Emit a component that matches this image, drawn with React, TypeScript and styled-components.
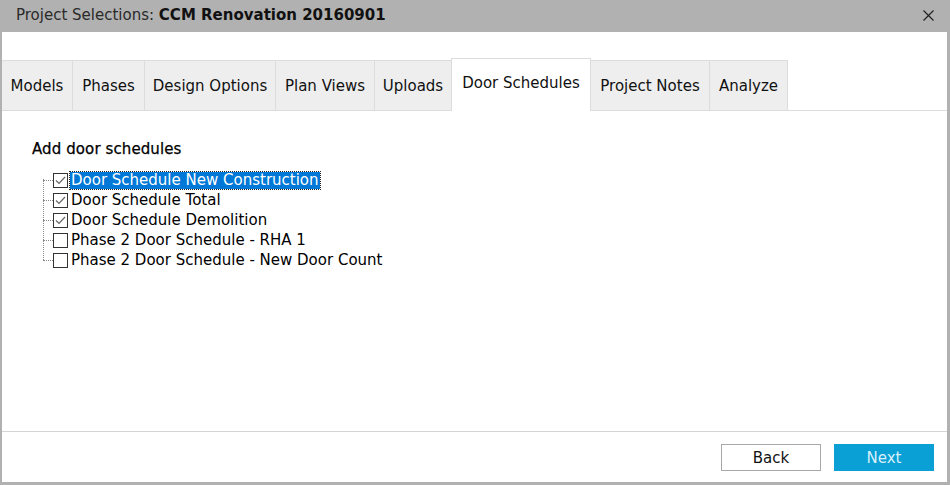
import React from "react";
import styled, { createGlobalStyle } from "styled-components";

const Global = createGlobalStyle`
  html, body { margin: 0; padding: 0; background: #fff; }
  body { font-family: "DejaVu Sans", Verdana, sans-serif; }
  * { box-sizing: border-box; }
`;

const Window = styled.div`
  width: 950px;
  height: 485px;
  display: flex;
  flex-direction: column;
  background: #fff;
  border-left: 2px solid #b1b1b1;
  border-right: 3px solid #b1b1b1;
  border-bottom: 3px solid #b1b1b1;
`;

const TitleBar = styled.div`
  height: 32px;
  margin: 0 -3px 0 -2px;
  background: #b1b1b1;
  display: flex;
  align-items: center;
  justify-content: space-between;
  padding: 0 16px 2px 16px;
  font-size: 15px;
  flex: none;
`;

const Title = styled.div`
  white-space: nowrap;
  color: #2a2a2a;
`;

const TitleStrong = styled.span`
  font-weight: bold;
  color: #111;
`;

const CloseIcon = () => (
  <svg width="11" height="11" viewBox="0 0 11 11">
    <path d="M0.5 0.5 L10.5 10.5 M10.5 0.5 L0.5 10.5" stroke="#222" strokeWidth="1.2" />
  </svg>
);

const Body = styled.div`
  flex: 1;
  display: flex;
  flex-direction: column;
  padding-top: 26px;
`;

const TabStrip = styled.div`
  display: flex;
  align-items: flex-end;
  height: 53px;
  border-bottom: 1px solid #dcdcdc;
  flex: none;
`;

const Tab = styled.div<{ $active?: boolean; $w: number; $first?: boolean }>`
  width: ${(p) => p.$w}px;
  height: ${(p) => (p.$active ? 53 : 50)}px;
  margin-bottom: ${(p) => (p.$active ? -1 : 0)}px;
  background: ${(p) => (p.$active ? "#fff" : "#eeeeee")};
  border-top: 1px solid #dcdcdc;
  border-right: 1px solid #dcdcdc;
  border-left: ${(p) => (p.$active ? "1px solid #dcdcdc" : "none")};
  margin-left: ${(p) => (p.$active ? -1 : 0)}px;
  display: flex;
  align-items: center;
  justify-content: center;
  padding-bottom: ${(p) => (p.$active ? 4 : 0)}px;
  font-size: 15px;
  color: #111;
  white-space: nowrap;
`;

const Content = styled.div`
  flex: 1;
  padding: 29px 30px 0;
  border-bottom: 1px solid #d4d4d4;
`;

const Heading = styled.div`
  font-size: 15px;
  color: #000;
  -webkit-text-stroke: 0.25px #000;
  margin-bottom: 12px;
  letter-spacing: 0.1px;
`;

const Tree = styled.div`
  position: relative;
  margin-left: 11px;
  display: flex;
  flex-direction: column;
`;

const TreeLine = styled.div`
  position: absolute;
  left: 0;
  top: 9px;
  bottom: 10px;
  border-left: 1px dotted #888;
`;

const Row = styled.div`
  height: 20px;
  display: flex;
  align-items: center;
  font-size: 15px;
  color: #000;
`;

const Stub = styled.span`
  width: 10px;
  border-top: 1px dotted #888;
  flex: none;
`;

const Box = styled.span`
  width: 15px;
  height: 15px;
  border: 1px solid #333;
  background: #fff;
  display: flex;
  align-items: center;
  justify-content: center;
  flex: none;
  margin-right: 2px;
`;

const Label = styled.span<{ $selected?: boolean }>`
  padding: 0 1px;
  line-height: 17px;
  white-space: nowrap;
  background: ${(p) => (p.$selected ? "#0078d7" : "transparent")};
  color: ${(p) => (p.$selected ? "#fff" : "#000")};
  outline: ${(p) => (p.$selected ? "1px dotted #222" : "none")};
`;

const Footer = styled.div`
  height: 50px;
  flex: none;
  display: flex;
  justify-content: flex-end;
  align-items: flex-start;
  gap: 13px;
  padding: 12px 13px 0 0;
`;

const Button = styled.button<{ $primary?: boolean }>`
  width: 100px;
  height: 27px;
  border: 1px solid ${(p) => (p.$primary ? "#0a9fd5" : "#a8a8a8")};
  background: ${(p) => (p.$primary ? "#0a9fd5" : "#fff")};
  color: ${(p) => (p.$primary ? "#d8f0fa" : "#111")};
  font-family: "DejaVu Sans", Tahoma, sans-serif;
  font-size: 15px;
  padding: 0;
`;

const Check = () => (
  <svg width="11" height="9" viewBox="0 0 11 9">
    <path d="M1 4.5 L4 7.5 L10 1" fill="none" stroke="#666" strokeWidth="1.2" />
  </svg>
);

const tabs: [string, number][] = [
  ["Models", 71],
  ["Phases", 72],
  ["Design Options", 131],
  ["Plan Views", 99],
  ["Uploads", 77],
  ["Door Schedules", 140],
  ["Project Notes", 119],
  ["Analyze", 78],
];

const items: [string, boolean][] = [
  ["Door Schedule New Construction", true],
  ["Door Schedule Total", true],
  ["Door Schedule Demolition", true],
  ["Phase 2 Door Schedule - RHA 1", false],
  ["Phase 2 Door Schedule - New Door Count", false],
];

export default function App() {
  return (
    <>
      <Global />
      <Window>
        <TitleBar>
          <Title>
            Project Selections: <TitleStrong>CCM Renovation 20160901</TitleStrong>
          </Title>
          <CloseIcon />
        </TitleBar>
        <Body>
          <TabStrip>
            {tabs.map(([t, w], i) => (
              <Tab key={t} $w={w} $first={i === 0} $active={t === "Door Schedules"}>
                {t}
              </Tab>
            ))}
          </TabStrip>
          <Content>
            <Heading>Add door schedules</Heading>
            <Tree>
              <TreeLine />
              {items.map(([t, c], i) => (
                <Row key={t}>
                  <Stub />
                  <Box>{c && <Check />}</Box>
                  <Label $selected={i === 0}>{t}</Label>
                </Row>
              ))}
            </Tree>
          </Content>
          <Footer>
            <Button>Back</Button>
            <Button $primary>Next</Button>
          </Footer>
        </Body>
      </Window>
    </>
  );
}
